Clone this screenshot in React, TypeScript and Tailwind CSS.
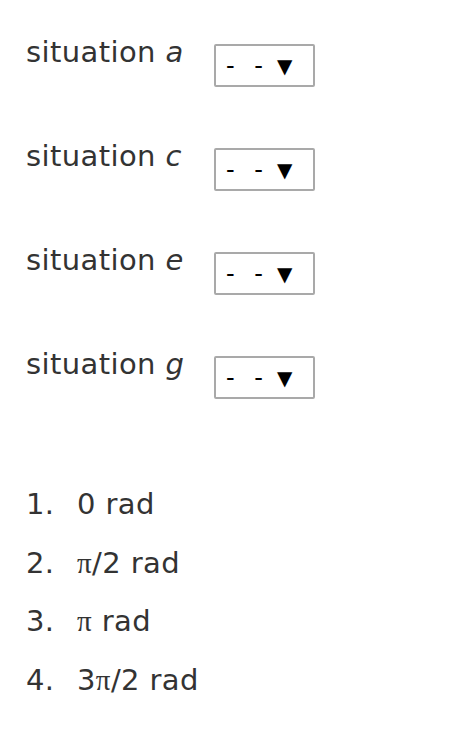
const situations = ["a", "c", "e", "g"]

const answers = [
  { n: 1, lead: "", pi: false, text: "0 rad" },
  { n: 2, lead: "", pi: true, text: "/2 rad" },
  { n: 3, lead: "", pi: true, text: " rad" },
  { n: 4, lead: "3", pi: true, text: "/2 rad" },
]

function Dropdown() {
  return (
    <div className="flex h-[43px] w-[101px] items-center rounded-[2px] border-2 border-[#a9a9a9] bg-white pl-[10px] text-[24px] tracking-normal text-black">
      <span className="tracking-[6px]">- -</span>
      <span className="ml-[8px] text-[20px]">▼</span>
    </div>
  )
}

export default function App() {
  return (
    <div
      className="min-h-[731px] w-[474px] bg-white pl-[26px] pt-[30px] text-[29px] tracking-[0.4px] text-[#333]"
      style={{ fontFamily: '"DejaVu Sans", Verdana, sans-serif' }}
    >
      <div className="flex flex-col gap-[47px]">
        {situations.map((s) => (
          <div key={s} className="flex items-start">
            <span className="w-[188px] leading-[44px]">
              situation <i>{s}</i>
            </span>
            <div className="mt-[14px]">
              <Dropdown />
            </div>
          </div>
        ))}
      </div>
      <ol className="mt-[76px] flex flex-col leading-[58.5px]">
        {answers.map((a) => (
          <li key={a.n} className="flex">
            <span className="w-[51px]">{a.n}.</span>
            <span>
              {a.lead}
              {a.pi && <span style={{ fontFamily: '"Liberation Serif", serif' }}>π</span>}
              {a.text}
            </span>
          </li>
        ))}
      </ol>
    </div>
  )
}
